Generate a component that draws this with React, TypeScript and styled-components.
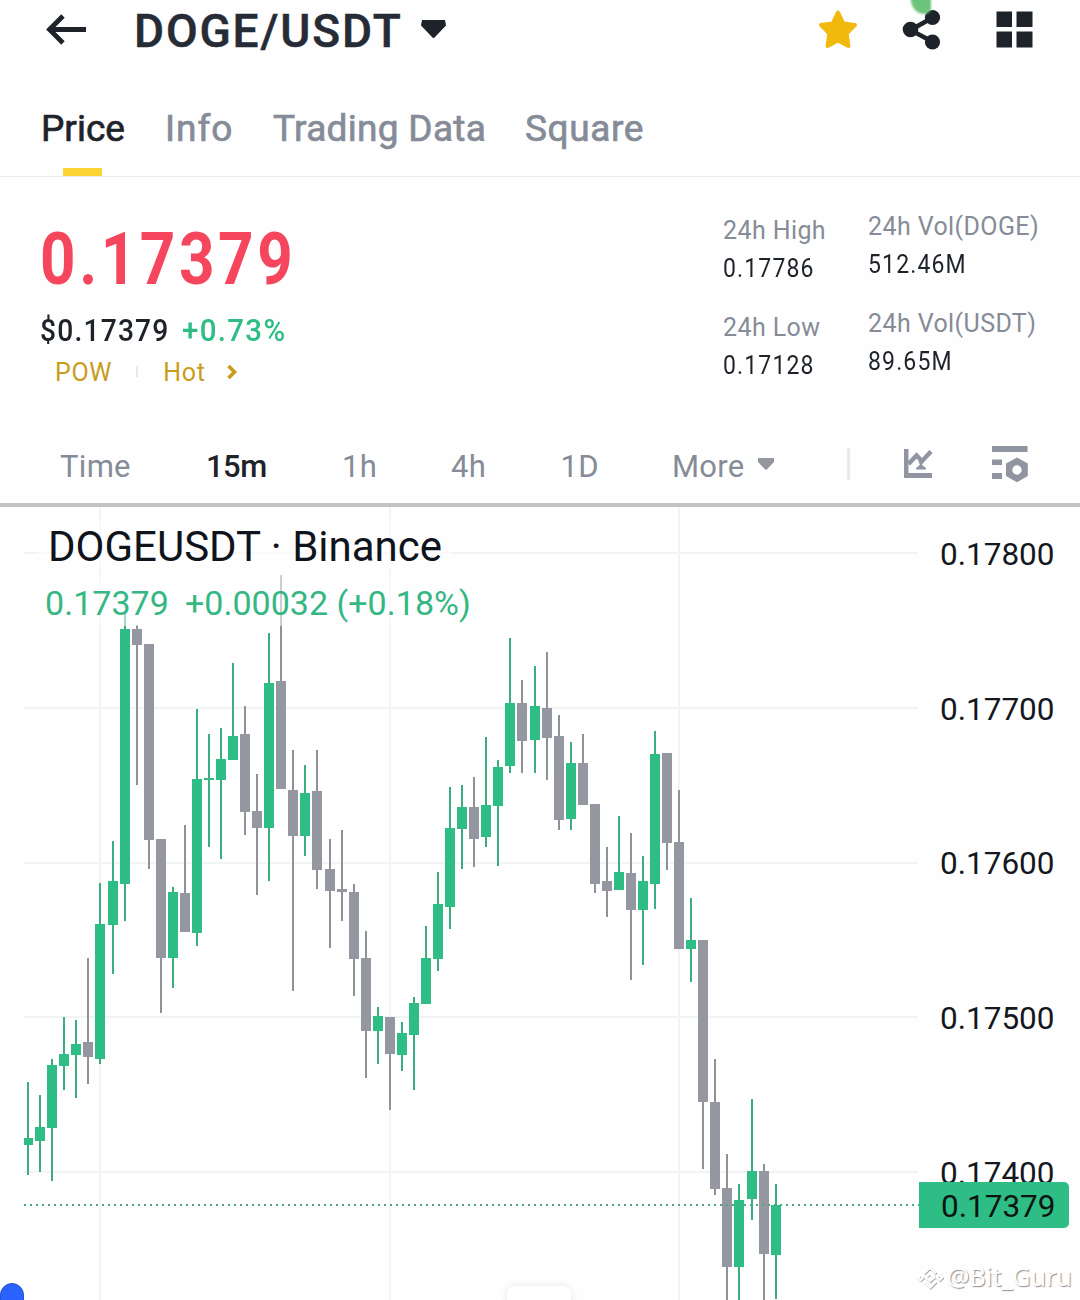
import React from "react";
import styled, { createGlobalStyle } from "styled-components";

const ink = "#1e2329";
const muted = "#858c97";
const green = "#2ebd85";
const grey = "#9497a0";

const GlobalStyle = createGlobalStyle`
  *, *::before, *::after { box-sizing: border-box; }
  html, body { margin: 0; padding: 0; background: #fefefe; }
  body { font-family: Roboto, "Liberation Sans", sans-serif; overflow: hidden; }
`;

const Screen = styled.main`
  position: relative;
  display: flex;
  flex-direction: column;
  width: 1080px;
  height: 1300px;
  overflow: hidden;
  background: #fefefe;
  color: ${ink};
  white-space: nowrap;
`;

const TopBar = styled.header`
  display: flex;
  align-items: center;
  height: 62px;
  padding: 0 46px 2px;
  flex: none;
`;

const Icon = styled.svg`
  display: block;
  flex: none;
  overflow: visible;
`;

const Title = styled.h1`
  margin: 1px 0 0 48px;
  width: 287px;
  font-size: 46px;
  line-height: 60px;
  font-weight: 500;
  letter-spacing: 1.85px;
  color: #262b36;
  -webkit-text-stroke: 0.5px #262b36;
`;

const Actions = styled.div`
  display: flex;
  align-items: center;
  gap: 44px;
  margin-left: auto;
`;

const ShareButton = styled.div`
  position: relative;
  margin-right: 10px;
`;

const Leaf = styled.span`
  position: absolute;
  left: 9px;
  top: -19px;
  width: 20px;
  height: 23px;
  border-radius: 8px 10px 7px 16px;
  background: #62bf73;
  opacity: 0.93;
  filter: blur(0.8px);
`;

const Tabs = styled.nav`
  display: flex;
  gap: 39px;
  height: 115px;
  padding: 18px 39px 0 41px;
  border-bottom: 1px solid #e9eaec;
  flex: none;
`;

const Tab = styled.div<{ $active?: boolean; $width: number; $spacing: number }>`
  display: flex;
  flex-direction: column;
  align-items: flex-start;
  width: ${(p) => p.$width}px;
  height: 96px;
  font-size: 37px;
  font-weight: 400;
  letter-spacing: ${(p) => p.$spacing}px;
  color: ${(p) => (p.$active ? ink : muted)};
  -webkit-text-stroke: 0.7px currentColor;
`;

const TabLabel = styled.span`
  height: 88px;
  line-height: 97px;
`;

const TabMark = styled.span`
  width: 39px;
  height: 8px;
  flex: none;
  margin-left: 22px;
  background: #fcd535;
`;

const Summary = styled.section`
  display: flex;
  justify-content: space-between;
  height: 248px;
  padding: 0 0 0 40px;
  flex: none;
`;

const PriceColumn = styled.div`
  display: flex;
  flex-direction: column;
  padding-top: 42px;
`;

const LastPrice = styled.div`
  height: 82px;
  line-height: 82px;
  font-size: 72px;
  font-weight: 700;
  letter-spacing: 4.2px;
  color: #f6465d;
  transform: scaleX(0.86);
  transform-origin: left;
`;

const SubRow = styled.div`
  display: flex;
  align-items: center;
  height: 60px;
`;

const Fiat = styled.span<{ $up?: boolean }>`
  width: 142px;
  font-size: 31px;
  line-height: 60px;
  font-weight: 500;
  letter-spacing: ${(p) => (p.$up ? 1.4 : 1.3)}px;
  color: ${(p) => (p.$up ? green : ink)};
  transform: scaleX(${(p) => (p.$up ? 0.95 : 0.91)});
  transform-origin: left;
`;

const TagRow = styled.div`
  display: flex;
  align-items: center;
  height: 24px;
  padding-left: 15px;
  font-size: 25px;
  line-height: 24px;
  letter-spacing: 0.7px;
  color: #c99d1c;
`;

const TagDivider = styled.i`
  width: 2px;
  height: 11px;
  margin: -3px 25px 0 24px;
  background: #e6e8ea;
`;

const Stats = styled.div`
  display: grid;
  grid-template-columns: 145px 212px;
`;

const StatColumn = styled.div<{ $top: number }>`
  display: flex;
  flex-direction: column;
  padding-top: ${(p) => p.$top}px;
`;

const Stat = styled.div`
  height: 97px;
`;

const StatLabel = styled.div`
  height: 38px;
  font-size: 25px;
  line-height: 38px;
  letter-spacing: 0.4px;
  color: ${muted};
`;

const StatValue = styled.div`
  height: 38px;
  font-size: 25px;
  line-height: 38px;
  letter-spacing: 1.25px;
  transform: scaleX(0.92);
  transform-origin: left;
`;

const Intervals = styled.div`
  display: flex;
  align-items: center;
  height: 82px;
  padding: 6px 0 0 60px;
  border-bottom: 4px solid #c0c3c6;
  flex: none;
`;

const Interval = styled.span<{ $width: number; $active?: boolean }>`
  width: ${(p) => p.$width}px;
  font-size: 31px;
  line-height: 60px;
  letter-spacing: ${(p) => (p.$active ? -0.5 : 0.3)}px;
  font-weight: ${(p) => (p.$active ? 500 : 400)};
  color: ${(p) => (p.$active ? ink : muted)};
`;

const IntervalDivider = styled.i`
  width: 3px;
  height: 32px;
  margin: -7px 54px 0 73px;
  background: #e9eaec;
`;

const IconSlot = styled.span<{ $gap: number }>`
  margin: -7px 0 0 ${(p) => p.$gap}px;
`;

const Chart = styled.section`
  position: relative;
  display: flex;
  flex: 1;
`;

const Axis = styled.div`
  display: flex;
  flex-direction: column;
  padding: 33px 0 0 20px;
`;

const AxisLabel = styled.span`
  height: 154.7px;
  line-height: 30px;
  font-size: 31.5px;
  color: #14171d;
`;

const PriceTag = styled.div`
  position: absolute;
  left: 919px;
  top: 675px;
  width: 150px;
  height: 46px;
  padding-left: 22px;
  border-radius: 0 5px 5px 0;
  background: ${green};
  color: #0c1512;
  font-size: 31.5px;
  line-height: 49px;
`;

const Legend = styled.div`
  position: absolute;
  left: 38px;
  top: 15px;
  display: flex;
  flex-direction: column;
  align-items: flex-start;
  gap: 4px;
`;

const LegendTitle = styled.div`
  width: 413px;
  height: 49px;
  padding-left: 10px;
  font-size: 42px;
  line-height: 49px;
  color: #0f131c;
  background: rgba(254, 254, 254, 0.6);
`;

const LegendPrice = styled.div`
  display: flex;
  gap: 16px;
  width: 437px;
  height: 51px;
  padding-left: 7px;
  font-size: 34px;
  line-height: 56px;
  letter-spacing: 0.04px;
  color: #35b783;
  background: rgba(254, 254, 254, 0.55);
`;

const BottomHandle = styled.div`
  position: absolute;
  left: 507px;
  top: 1286px;
  width: 64px;
  height: 30px;
  border-radius: 8px;
  background: #fff;
  box-shadow: 0 0 7px rgba(0, 0, 0, 0.1);
`;

const BlueKnob = styled.div`
  position: absolute;
  left: 0;
  top: 1283px;
  width: 24px;
  height: 40px;
  border-radius: 12px;
  background: #2962ff;
  border: 1px solid #2453cf;
`;

const Watermark = styled.div`
  position: absolute;
  left: 916px;
  top: 1260px;
  display: flex;
  align-items: center;
  gap: 3px;
  height: 32px;
  font-family: "Noto Sans", sans-serif;
  font-size: 25px;
  line-height: 32px;
  color: #fff;
  text-shadow: 1px 1px 1px #8e9095;
`;

const markPath =
  "M8 9.5L14 3.5L20 9.5M9.5 13L14 9.5L18.5 13M9.5 13L14 17L18.5 13M8 17.5L14 23.5L20 17.5M2 13.5L4.5 11L7 13.5L4.5 16ZM21 13.5L23.5 11L26 13.5L23.5 16Z";

/* [x, high, bodyTop, bodyBottom, low, rising] */
const candles: [number, number, number, number, number, number][] = [
  [28, 1082, 1138, 1145, 1175, 1],
  [40, 1095, 1127, 1141, 1172, 1],
  [52, 1059, 1065, 1128, 1181, 1],
  [64, 1017, 1054, 1066, 1090, 1],
  [76, 1020, 1044, 1055, 1098, 1],
  [88, 958, 1042, 1057, 1084, 0],
  [100, 883, 924, 1059, 1064, 1],
  [113, 841, 881, 925, 974, 1],
  [125, 612, 629, 884, 921, 1],
  [137, 625, 629, 645, 785, 0],
  [149, 644, 644, 840, 869, 0],
  [161, 839, 839, 958, 1013, 0],
  [173, 887, 892, 958, 988, 1],
  [185, 825, 893, 932, 932, 0],
  [197, 709, 779, 933, 946, 1],
  [209, 734, 778, 780, 847, 1],
  [221, 728, 759, 780, 859, 1],
  [233, 663, 736, 760, 760, 1],
  [245, 706, 734, 812, 835, 0],
  [257, 774, 811, 828, 895, 0],
  [269, 633, 683, 828, 881, 1],
  [281, 575, 681, 789, 789, 0],
  [293, 750, 790, 836, 991, 0],
  [305, 765, 793, 836, 856, 1],
  [317, 750, 791, 870, 889, 0],
  [330, 839, 869, 891, 948, 0],
  [342, 830, 889, 892, 921, 0],
  [354, 884, 892, 959, 996, 0],
  [366, 931, 958, 1031, 1078, 0],
  [378, 1007, 1016, 1031, 1064, 1],
  [390, 1017, 1017, 1054, 1110, 0],
  [402, 1022, 1033, 1055, 1071, 1],
  [414, 997, 1003, 1035, 1090, 1],
  [426, 926, 958, 1004, 1004, 1],
  [438, 872, 904, 959, 971, 1],
  [450, 787, 828, 907, 929, 1],
  [462, 785, 807, 829, 869, 1],
  [474, 777, 807, 839, 867, 0],
  [486, 737, 805, 837, 847, 1],
  [498, 760, 767, 806, 866, 1],
  [510, 638, 703, 766, 773, 1],
  [522, 680, 703, 741, 773, 0],
  [535, 666, 706, 740, 773, 1],
  [547, 652, 708, 738, 780, 0],
  [559, 715, 736, 820, 830, 0],
  [571, 742, 763, 819, 830, 1],
  [583, 734, 763, 805, 805, 0],
  [595, 804, 804, 884, 893, 0],
  [607, 847, 881, 891, 917, 0],
  [619, 816, 872, 890, 890, 1],
  [631, 833, 873, 910, 980, 0],
  [643, 856, 881, 910, 965, 1],
  [655, 731, 754, 884, 909, 1],
  [667, 753, 753, 843, 870, 0],
  [679, 790, 842, 949, 949, 0],
  [691, 898, 940, 949, 982, 1],
  [703, 940, 940, 1102, 1169, 0],
  [715, 1059, 1102, 1189, 1195, 0],
  [727, 1154, 1188, 1267, 1300, 0],
  [739, 1184, 1200, 1267, 1300, 1],
  [752, 1099, 1171, 1199, 1220, 1],
  [764, 1164, 1171, 1254, 1300, 0],
  [776, 1184, 1205, 1255, 1299, 1],
];

const intervals = [
  { label: "Time", width: 146 },
  { label: "15m", width: 136, active: true },
  { label: "1h", width: 109 },
  { label: "4h", width: 109.5 },
  { label: "1D", width: 111.5 },
  { label: "More", width: 86 },
];

const tabs = [
  { label: "Price", width: 85, spacing: 0, active: true },
  { label: "Info", width: 69, spacing: 1 },
  { label: "Trading Data", width: 213, spacing: 0.3 },
  { label: "Square", width: 120, spacing: 0.6 },
];

const axis = ["0.17800", "0.17700", "0.17600", "0.17500", "0.17400"];

function CandlePlot() {
  return (
    <Icon width={920} height={793} viewBox="0 507 920 793" shapeRendering="crispEdges">
      <g fill="#f2f3f3">
        {[552, 707, 862, 1016, 1171].map((y) => (
          <rect key={y} x={24} y={y} width={894} height={2} />
        ))}
        {[99, 389, 678].map((x) => (
          <rect key={x} x={x} y={507} width={2} height={793} />
        ))}
      </g>
      {candles.map(([x, high, top, bottom, low, up]) => (
        <g key={x}>
          <rect x={x - 1} y={high} width={2} height={low - high} fill={up ? "#3bad80" : "#909298"} />
          <rect
            x={x === 28 ? 24 : x - 5}
            y={top}
            width={x === 28 ? 9 : 10}
            height={bottom - top}
            fill={up ? green : grey}
          />
        </g>
      ))}
      <path d="M24 1205H919" stroke="#4aa684" strokeWidth={2} strokeDasharray="2 4" />
    </Icon>
  );
}

export default function App() {
  return (
    <>
      <GlobalStyle />
      <Screen>
        <TopBar>
          <Icon width={40} height={32} viewBox="0 0 40 32">
            <path d="M40 15.5H5M17 2L3.5 15.5L17 29" fill="none" stroke={ink} strokeWidth={4.8} />
          </Icon>
          <Title>DOGE/USDT</Title>
          <Icon width={25} height={20} viewBox="0 0 25 20">
            <path d="M1 0H24L25 5.5L13.5 17.5Q12.5 18.5 11.5 17.5L0 5.5Z" fill={ink} />
          </Icon>
          <Actions>
            <Icon width={40} height={40} viewBox="0 0 40 40">
              <path
                d="M20 2.5L25.2 13.4L37 14.9L28.6 23.5L30.4 36L20 30.6L9.6 36L11.4 23.5L3 14.9L14.8 13.4Z"
                fill="#f0b90b"
                stroke="#f0b90b"
                strokeWidth={4}
                strokeLinejoin="round"
              />
            </Icon>
            <ShareButton>
              <Icon width={40} height={40} viewBox="0 0 40 40">
                <path d="M31 7.5L8.5 20L31 32" fill="none" stroke={ink} strokeWidth={4.6} />
                <circle cx="30.5" cy="7.5" r="7.6" fill={ink} />
                <circle cx="8.5" cy="19.5" r="7.8" fill={ink} />
                <circle cx="30.5" cy="32" r="7.6" fill={ink} />
              </Icon>
              <Leaf />
            </ShareButton>
            <Icon width={38} height={38} viewBox="0 0 38 38" fill={ink}>
              <path d="M.5 .5H16V16H.5ZM20.5 .5H36.5V16H20.5ZM.5 20.5H16V36.5H.5ZM20.5 20.5H36.5V36.5H20.5Z" />
            </Icon>
          </Actions>
        </TopBar>

        <Tabs>
          {tabs.map((t) => (
            <Tab key={t.label} $active={t.active} $width={t.width} $spacing={t.spacing}>
              <TabLabel>{t.label}</TabLabel>
              {t.active && <TabMark />}
            </Tab>
          ))}
        </Tabs>

        <Summary>
          <PriceColumn>
            <LastPrice>0.17379</LastPrice>
            <SubRow>
              <Fiat>$0.17379</Fiat>
              <Fiat $up>+0.73%</Fiat>
            </SubRow>
            <TagRow>
              <span>POW</span>
              <TagDivider />
              <span>Hot</span>
              <Icon width={34} height={18} viewBox="0 0 34 18">
                <path d="M22.5 2L28.5 8L22.5 14" fill="none" stroke="#c99d1c" strokeWidth={3.6} />
              </Icon>
            </TagRow>
          </PriceColumn>
          <Stats>
            <StatColumn $top={35}>
              <Stat>
                <StatLabel>24h High</StatLabel>
                <StatValue>0.17786</StatValue>
              </Stat>
              <Stat>
                <StatLabel>24h Low</StatLabel>
                <StatValue>0.17128</StatValue>
              </Stat>
            </StatColumn>
            <StatColumn $top={31}>
              <Stat>
                <StatLabel>24h Vol(DOGE)</StatLabel>
                <StatValue>512.46M</StatValue>
              </Stat>
              <Stat>
                <StatLabel>24h Vol(USDT)</StatLabel>
                <StatValue>89.65M</StatValue>
              </Stat>
            </StatColumn>
          </Stats>
        </Summary>

        <Intervals>
          {intervals.map((i) => (
            <Interval key={i.label} $width={i.width} $active={i.active}>
              {i.label}
            </Interval>
          ))}
          <IconSlot $gap={0}>
            <Icon width={16} height={12} viewBox="0 0 16 12">
              <path d="M0 0H16V4L8.8 11.4Q8 12 7.2 11.4L0 4Z" fill={grey} />
            </Icon>
          </IconSlot>
          <IntervalDivider />
          <IconSlot $gap={0}>
            <Icon width={30} height={30} viewBox="0 0 30 30">
              <path d="M0 0H4.5V24H28V29H0Z" fill="#9095a1" />
              <path d="M4.5 15L12.5 6.5L18 12L27 2.5" fill="none" stroke="#9095a1" strokeWidth={4.4} />
              <path d="M14.5 12H19L18 16L22 19V20.5H12V19L15.8 16Z" fill="#9095a1" />
            </Icon>
          </IconSlot>
          <IconSlot $gap={58}>
            <Icon width={36} height={38} viewBox="0 0 36 38" fill="#9095a1">
              <path d="M0 1H35.5V7H0ZM0 14.5H10V20H0ZM0 28H10V34H0Z" />
              <path
                fillRule="evenodd"
                d="M25 12.5L35.8 18.6V31L25 37.3L14 31V18.6ZM25 20.3A4.7 4.7 0 1 0 25 29.7A4.7 4.7 0 1 0 25 20.3Z"
              />
            </Icon>
          </IconSlot>
        </Intervals>

        <Chart>
          <CandlePlot />
          <Axis>
            {axis.map((a) => (
              <AxisLabel key={a}>{a}</AxisLabel>
            ))}
          </Axis>
          <Legend>
            <LegendTitle>DOGEUSDT · Binance</LegendTitle>
            <LegendPrice>
              <span>0.17379</span>
              <span>+0.00032 (+0.18%)</span>
            </LegendPrice>
          </Legend>
          <PriceTag>0.17379</PriceTag>
        </Chart>

        <BottomHandle />
        <BlueKnob />
        <Watermark>
          <Icon width={28} height={27} viewBox="0 -1 28 27" fill="none" strokeWidth={2.4}>
            <path d={markPath} stroke="#a3a5aa" transform="translate(.7 .9)" />
            <path d={markPath} stroke="#fff" />
          </Icon>
          <span>@Bit_Guru</span>
        </Watermark>
      </Screen>
    </>
  );
}
